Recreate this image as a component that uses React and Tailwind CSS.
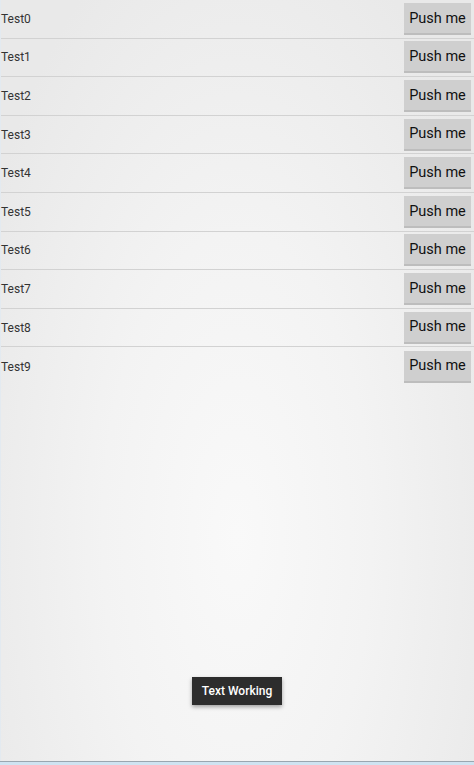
import React from 'react';

const rows = Array.from({ length: 10 }, (_, i) => `Test${i}`);

export default function App() {
  return (
    <div
      className="relative w-[474px] h-[765px] overflow-hidden flex flex-col bg-[radial-gradient(ellipse_at_50%_70%,#f9f9f9_0%,#f3f3f3_40%,#e9e9e9_85%)]"
      style={{ fontFamily: 'Roboto, "Liberation Sans", sans-serif' }}
    >
      <div className="flex flex-1">
        <div className="w-[1px] bg-[#e3eaf0]" />
        <div className="flex-1 flex flex-col">
          {rows.map((label, i) => (
            <div
              key={label}
              className={`flex items-center justify-between h-[38.6px] pr-[3px] ${
                i < rows.length - 1 ? 'border-b border-[#d2d2d2]' : ''
              }`}
            >
              <span className="text-[12px] text-[#333] leading-none">{label}</span>
              <button className="w-[67px] h-[32px] pt-[2px] bg-[#cfcfcf] border-b-2 border-[#bdbdbd] text-[14.5px] text-[#111] leading-none">
                Push me
              </button>
            </div>
          ))}
        </div>
      </div>

      {/* bottom edge */}
      <div className="h-[1px] bg-[#9aa6b0]" />
      <div className="h-[3px] bg-[#cfe3f1]" />

      {/* toast */}
      <div className="absolute left-[192px] top-[677px] w-[90px] h-[28px] bg-[#2d2d2d] flex items-center justify-center shadow-[0_2px_4px_rgba(0,0,0,0.35)]">
        <span className="text-[12px] font-medium text-white">Text Working</span>
      </div>
    </div>
  );
}
